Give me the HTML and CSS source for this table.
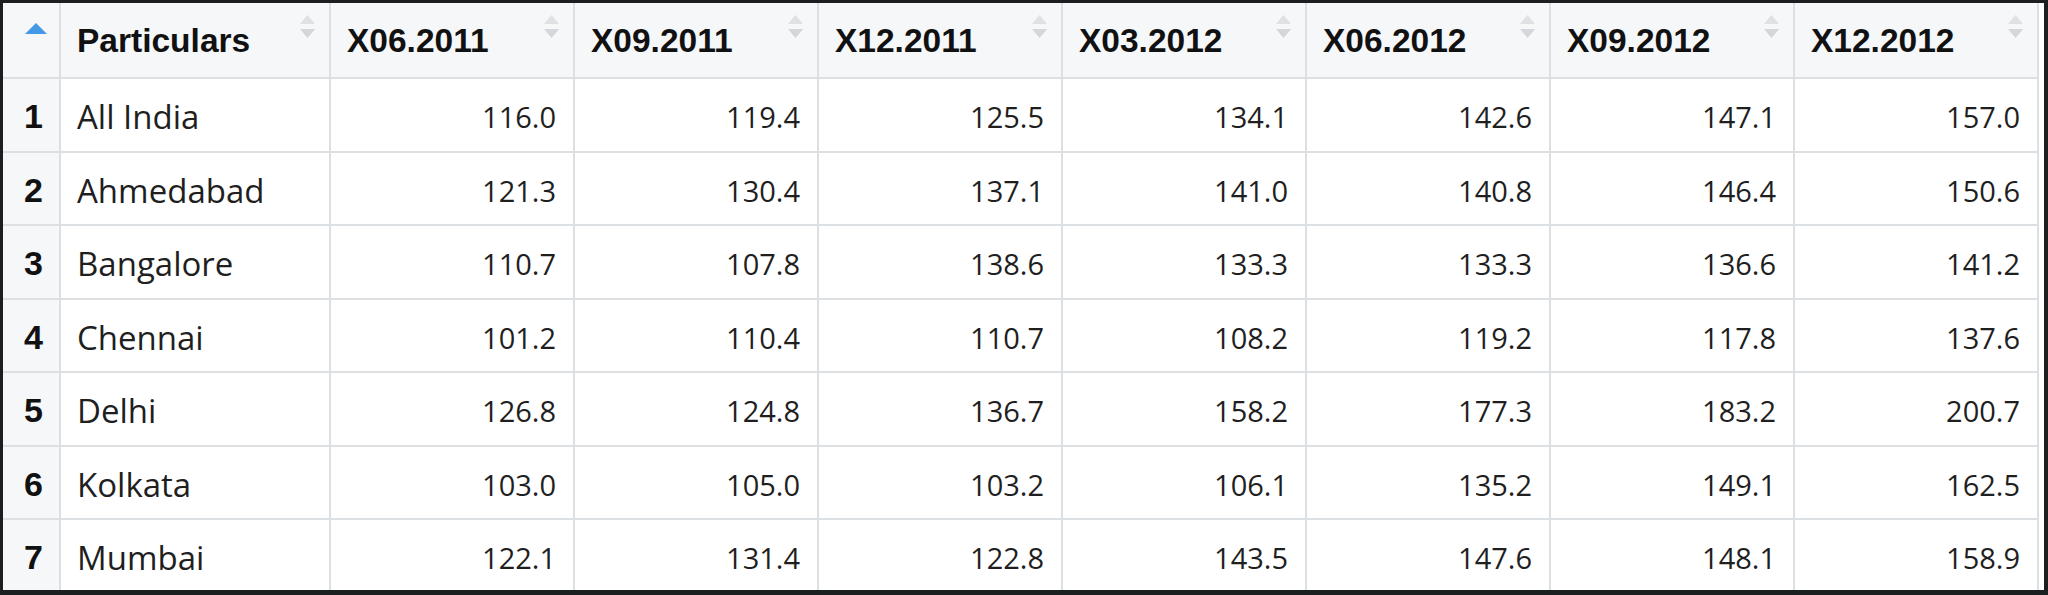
FILE: index.html
```html
<!DOCTYPE html>
<html>
<head>
<meta charset="utf-8">
<link rel="stylesheet" href="styles.css">
</head>
<body>
<div class="frame">
<table class="grid">
<colgroup>
<col class="c-idx"><col class="c-name"><col class="c-num"><col class="c-num"><col class="c-num"><col class="c-num"><col class="c-num"><col class="c-num"><col class="c-num">
</colgroup>
<thead>
<tr>
<th class="idx-h"><svg class="asc" width="22" height="12" viewBox="0 0 22 12"><polygon points="0,11 11,0 22,11" fill="#4499e6"/></svg></th>
<th>Particulars<svg class="sort" width="15" height="26" viewBox="0 0 15 26"><polygon points="0,10 7.5,1 15,10" fill="#dfe2e5"/><polygon points="0,15 7.5,24 15,15" fill="#d3d7db"/></svg></th>
<th>X06.2011<svg class="sort" width="15" height="26" viewBox="0 0 15 26"><polygon points="0,10 7.5,1 15,10" fill="#dfe2e5"/><polygon points="0,15 7.5,24 15,15" fill="#d3d7db"/></svg></th>
<th>X09.2011<svg class="sort" width="15" height="26" viewBox="0 0 15 26"><polygon points="0,10 7.5,1 15,10" fill="#dfe2e5"/><polygon points="0,15 7.5,24 15,15" fill="#d3d7db"/></svg></th>
<th>X12.2011<svg class="sort" width="15" height="26" viewBox="0 0 15 26"><polygon points="0,10 7.5,1 15,10" fill="#dfe2e5"/><polygon points="0,15 7.5,24 15,15" fill="#d3d7db"/></svg></th>
<th>X03.2012<svg class="sort" width="15" height="26" viewBox="0 0 15 26"><polygon points="0,10 7.5,1 15,10" fill="#dfe2e5"/><polygon points="0,15 7.5,24 15,15" fill="#d3d7db"/></svg></th>
<th>X06.2012<svg class="sort" width="15" height="26" viewBox="0 0 15 26"><polygon points="0,10 7.5,1 15,10" fill="#dfe2e5"/><polygon points="0,15 7.5,24 15,15" fill="#d3d7db"/></svg></th>
<th>X09.2012<svg class="sort" width="15" height="26" viewBox="0 0 15 26"><polygon points="0,10 7.5,1 15,10" fill="#dfe2e5"/><polygon points="0,15 7.5,24 15,15" fill="#d3d7db"/></svg></th>
<th>X12.2012<svg class="sort" width="15" height="26" viewBox="0 0 15 26"><polygon points="0,10 7.5,1 15,10" fill="#dfe2e5"/><polygon points="0,15 7.5,24 15,15" fill="#d3d7db"/></svg></th>
</tr>
</thead>
<tbody>
<tr><td class="idx">1</td><td class="txt">All India</td><td>116.0</td><td>119.4</td><td>125.5</td><td>134.1</td><td>142.6</td><td>147.1</td><td>157.0</td></tr>
<tr><td class="idx">2</td><td class="txt">Ahmedabad</td><td>121.3</td><td>130.4</td><td>137.1</td><td>141.0</td><td>140.8</td><td>146.4</td><td>150.6</td></tr>
<tr><td class="idx">3</td><td class="txt">Bangalore</td><td>110.7</td><td>107.8</td><td>138.6</td><td>133.3</td><td>133.3</td><td>136.6</td><td>141.2</td></tr>
<tr><td class="idx">4</td><td class="txt">Chennai</td><td>101.2</td><td>110.4</td><td>110.7</td><td>108.2</td><td>119.2</td><td>117.8</td><td>137.6</td></tr>
<tr><td class="idx">5</td><td class="txt">Delhi</td><td>126.8</td><td>124.8</td><td>136.7</td><td>158.2</td><td>177.3</td><td>183.2</td><td>200.7</td></tr>
<tr><td class="idx">6</td><td class="txt">Kolkata</td><td>103.0</td><td>105.0</td><td>103.2</td><td>106.1</td><td>135.2</td><td>149.1</td><td>162.5</td></tr>
<tr><td class="idx">7</td><td class="txt">Mumbai</td><td>122.1</td><td>131.4</td><td>122.8</td><td>143.5</td><td>147.6</td><td>148.1</td><td>158.9</td></tr>
</tbody>
</table>
</div>
</body>
</html>
```

FILE: styles.css
```css
html, body {
  margin: 0;
  padding: 0;
  background: #1c1f20;
}

.frame {
  box-sizing: border-box;
  width: 2048px;
  height: 595px;
  border-style: solid;
  border-color: #1c1f20;
  border-width: 3px 4px 5px 3px;
  background: #ffffff;
  overflow: hidden;
}

.grid {
  border-collapse: separate;
  border-spacing: 0;
  table-layout: fixed;
  width: 2036px;
  font-family: "Open Sans", "Liberation Sans", sans-serif;
  color: #1e1e1e;
}

.c-idx { width: 58px; }
.c-name { width: 270px; }
.c-num { width: 244px; }

.grid th,
.grid td {
  box-sizing: border-box;
  border-right: 2px solid #dde0e3;
  border-bottom: 2px solid #dde0e3;
  padding: 0 17px 0 16px;
  white-space: nowrap;
  overflow: hidden;
}

.grid th {
  position: relative;
  height: 76px;
  padding-top: 2px;
  background: #f5f7f9;
  font-family: "Liberation Sans", Arial, sans-serif;
  font-weight: bold;
  font-size: 33.5px;
  text-align: left;
  color: #111111;
  vertical-align: middle;
}

.grid td {
  height: 73.5px;
  padding-top: 4px;
  font-size: 29px;
  text-align: right;
  vertical-align: middle;
  color: #1f1f1f;
}

.grid td.txt {
  text-align: left;
  font-size: 33px;
}

.grid td.idx {
  background: #f5f7f9;
  font-family: "Liberation Sans", Arial, sans-serif;
  font-weight: bold;
  font-size: 34px;
  color: #111111;
  padding: 4px 16px 0 0;
}

.grid th.idx-h {
  padding: 0;
}

.asc {
  position: absolute;
  left: 22px;
  top: 20px;
}

.sort {
  position: absolute;
  right: 14px;
  top: 11px;
}
```
